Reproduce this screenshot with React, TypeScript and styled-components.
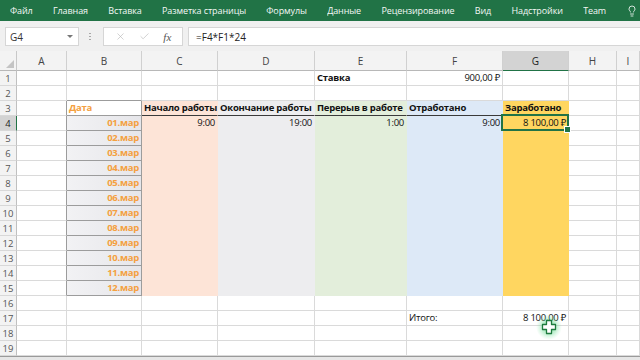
import styled, { createGlobalStyle } from "styled-components";
import { Lightbulb, X, Check } from "lucide-react";

const GlobalStyle = createGlobalStyle`
  html, body {
    margin: 0;
    padding: 0;
    background: #f0f0f0;
  }
  body {
    width: 640px;
    height: 360px;
    overflow: hidden;
    font-family: "Open Sans", "Noto Sans", sans-serif;
  }
`;

const Window = styled.div`
  position: relative;
  width: 640px;
  height: 360px;
  display: flex;
  flex-direction: column;
  background: #f0f0f0;
  overflow: hidden;
`;

const Ribbon = styled.nav`
  height: 21px;
  flex: none;
  background: #217346;
  display: flex;
  align-items: center;
  padding-left: 10px;
  gap: 20.3px;
  color: #ffffff;
  font-size: 9px;
  letter-spacing: -0.1px;
`;

const Tab = styled.span`
  white-space: nowrap;
  opacity: 0.95;
`;

const TellMe = styled.span`
  margin-left: auto;
  margin-right: 4px;
  display: flex;
`;

const FormulaBar = styled.div`
  height: 30px;
  flex: none;
  display: flex;
  align-items: center;
  padding: 1px 0 0 5px;
  box-sizing: border-box;
  background: #f0f0f0;
`;

const NameBox = styled.div`
  width: 74px;
  height: 19px;
  box-sizing: border-box;
  background: #fff;
  border: 1px solid #d6d6d6;
  display: flex;
  align-items: center;
  justify-content: space-between;
  padding: 0 5px 0 4px;
  font-size: 10px;
  color: #333;
`;

const Caret = styled.span`
  width: 0;
  height: 0;
  border-left: 3px solid transparent;
  border-right: 3px solid transparent;
  border-top: 3px solid #777;
`;

const Grip = styled.span`
  width: 2px;
  margin: 0 12px 0 10px;
  height: 10px;
  background: radial-gradient(circle, #a8a8a8 45%, transparent 50%) 0 0 / 2px 3px repeat-y;
`;

const ButtonBox = styled.div`
  width: 80px;
  height: 19px;
  box-sizing: border-box;
  background: #fff;
  border: 1px solid #d6d6d6;
  display: flex;
  align-items: center;
  justify-content: space-around;
  padding: 0 4px;
  color: #b8b8b8;
`;

const Fx = styled.span`
  font-family: "Liberation Serif", serif;
  font-style: italic;
  font-size: 11px;
  color: #555;
`;

const FormulaInput = styled.div`
  flex: 1;
  height: 19px;
  margin-left: 5px;
  box-sizing: border-box;
  background: #fff;
  border: 1px solid #d6d6d6;
  border-right: none;
  display: flex;
  align-items: center;
  padding-left: 7px;
  font-size: 10px;
  color: #222;
`;

const Sheet = styled.div`
  display: grid;
  grid-template-columns: 17px 50px 75px 76px 97px 92px 96px 66px 48px 23px;
  grid-template-rows: 20px;
  grid-auto-rows: 15px;
  background: #ffffff;
  font-size: 9.5px;
  letter-spacing: -0.25px;
  color: #111;
`;

const Corner = styled.div`
  position: relative;
  background: #f3f3f3;
  border-right: 1px solid #c8c8c8;
  border-bottom: 1px solid #b8b8b8;
  box-sizing: border-box;
  &::after {
    content: "";
    position: absolute;
    right: 2px;
    bottom: 2px;
    border-left: 8px solid transparent;
    border-bottom: 8px solid #c4c4c4;
  }
`;

const ColHeader = styled.div<{ $active?: boolean }>`
  background: ${(p) => (p.$active ? "#d3d3d3" : "#f3f3f3")};
  color: ${(p) => (p.$active ? "#222" : "#444")};
  border-right: 1px solid #d0d0d0;
  border-bottom: 1px solid ${(p) => (p.$active ? "#217346" : "#b8b8b8")};
  box-sizing: border-box;
  display: flex;
  align-items: center;
  justify-content: center;
  font-size: 10px;
  letter-spacing: 0;
`;

const RowHeader = styled.div<{ $active?: boolean }>`
  background: ${(p) => (p.$active ? "#d3d3d3" : "#f3f3f3")};
  color: ${(p) => (p.$active ? "#222" : "#555")};
  border-right: 1px solid ${(p) => (p.$active ? "#217346" : "#c0c0c0")};
  border-bottom: 1px solid #d8d8d8;
  box-sizing: border-box;
  display: flex;
  align-items: center;
  justify-content: center;
  font-size: 9.5px;
  letter-spacing: 0;
`;

const Cell = styled.div<{
  $fill: string;
  $right: string;
  $bottom: string;
  $align: "left" | "right";
  $bold?: boolean;
  $color?: string;
}>`
  position: relative;
  background: ${(p) => p.$fill};
  border-right: 1px solid ${(p) => p.$right};
  border-bottom: 1px solid ${(p) => p.$bottom};
  box-sizing: border-box;
  display: flex;
  align-items: center;
  justify-content: ${(p) => (p.$align === "right" ? "flex-end" : "flex-start")};
  padding: 0 2px;
  white-space: nowrap;
  font-weight: ${(p) => (p.$bold ? 700 : 400)};
  color: ${(p) => p.$color || "#111"};
  line-height: 1;
`;

const Spill = styled.span`
  position: relative;
  z-index: 2;
`;

const Selection = styled.div`
  position: absolute;
  inset: -2px -1px -1px -2px;
  border: 2px solid #217346;
  z-index: 3;
  pointer-events: none;
  &::after {
    content: "";
    position: absolute;
    right: -4px;
    bottom: -4px;
    width: 5px;
    height: 5px;
    background: #217346;
    border: 1px solid #fff;
  }
`;

const Cursor = styled.svg`
  position: absolute;
  left: 536px;
  top: 314px;
  z-index: 5;
`;

const BottomEdge = styled.div`
  flex: 1;
  border-top: 1px solid #9a9a9a;
  background: #e6e6e6;
`;

const TABS = [
  "Файл",
  "Главная",
  "Вставка",
  "Разметка страницы",
  "Формулы",
  "Данные",
  "Рецензирование",
  "Вид",
  "Надстройки",
  "Team",
];

const COLS = ["A", "B", "C", "D", "E", "F", "G", "H", "I"];

const FILLS: Record<string, string> = {
  C: "#fde4d7",
  D: "#ededef",
  E: "#e3eedb",
  F: "#dde9f7",
  G: "#ffd660",
};

const ORANGE = "#f4a040";
const GRID = "#dadada";
const BOX = "#9c9c9c";

type Content = { text: string; align?: "left" | "right"; bold?: boolean; color?: string };

const CONTENT: Record<string, Content> = {
  E1: { text: "Ставка", bold: true },
  F1: { text: "900,00 ₽", align: "right" },
  B3: { text: "Дата", bold: true, color: ORANGE },
  C3: { text: "Начало работы", bold: true },
  D3: { text: "Окончание работы", bold: true },
  E3: { text: "Перерыв в работе", bold: true },
  F3: { text: "Отработано", bold: true },
  G3: { text: "Заработано", bold: true },
  C4: { text: "9:00", align: "right" },
  D4: { text: "19:00", align: "right" },
  E4: { text: "1:00", align: "right" },
  F4: { text: "9:00", align: "right" },
  G4: { text: "8 100,00 ₽", align: "right" },
  F17: { text: "Итого:" },
  G17: { text: "8 100,00 ₽", align: "right" },
};

for (let d = 1; d <= 12; d++) {
  CONTENT[`B${d + 3}`] = {
    text: `${String(d).padStart(2, "0")}.мар`,
    align: "right",
    bold: true,
    color: ORANGE,
  };
}

const ROWS = Array.from({ length: 19 }, (_, i) => i + 1);

function cellStyle(col: string, row: number) {
  const inTable = row >= 3 && row <= 15;
  const fill = inTable && FILLS[col] ? FILLS[col] : "#ffffff";
  let right = fill !== "#ffffff" ? fill : GRID;
  let bottom = fill !== "#ffffff" ? fill : GRID;

  if (inTable && (col === "A" || col === "B")) right = BOX;
  if (col === "B" && row >= 2 && row <= 15) bottom = BOX;
  if (row >= 4 && row <= 15 && col === "B")
    return { fill: "linear-gradient(90deg, #f2f2f4, #e6e6ea)", right, bottom };
  if (row === 3 && ["C", "D", "E", "F"].includes(col)) bottom = "#3a3a3a";

  return { fill, right, bottom };
}

export default function App() {
  return (
    <Window>
      <GlobalStyle />
      <Ribbon>
        {TABS.map((t) => (
          <Tab key={t}>{t}</Tab>
        ))}
        <TellMe>
          <Lightbulb size={12} strokeWidth={1.6} />
        </TellMe>
      </Ribbon>

      <FormulaBar>
        <NameBox>
          G4
          <Caret />
        </NameBox>
        <Grip />
        <ButtonBox>
          <X size={11} strokeWidth={1.4} />
          <Check size={11} strokeWidth={1.4} />
          <Fx>fx</Fx>
        </ButtonBox>
        <FormulaInput>=F4*F1*24</FormulaInput>
      </FormulaBar>

      <Sheet>
        <Corner />
        {COLS.map((c) => (
          <ColHeader key={`h${c}`} $active={c === "G"}>
            {c}
          </ColHeader>
        ))}
        {ROWS.map((r) => [
          <RowHeader key={`r${r}`} $active={r === 4}>
            {r}
          </RowHeader>,
          ...COLS.map((c) => {
            const id = `${c}${r}`;
            const s = cellStyle(c, r);
            const content = CONTENT[id];
            return (
              <Cell
                key={id}
                $fill={s.fill}
                $right={s.right}
                $bottom={s.bottom}
                $align={content?.align || "left"}
                $bold={content?.bold}
                $color={content?.color}
              >
                {content && <Spill>{content.text}</Spill>}
                {id === "G4" && <Selection />}
              </Cell>
            );
          }),
        ])}
      </Sheet>
      <BottomEdge />

      <Cursor width="26" height="26" viewBox="0 0 26 26">
        <defs>
          <radialGradient id="glow">
            <stop offset="0%" stopColor="#3fcf6f" stopOpacity="0.75" />
            <stop offset="60%" stopColor="#5fd98a" stopOpacity="0.35" />
            <stop offset="100%" stopColor="#8fe6ad" stopOpacity="0" />
          </radialGradient>
        </defs>
        <circle cx="13" cy="13" r="13" fill="url(#glow)" />
        <path
          d="M10.5 6.5h5v4h4v5h-4v4h-5v-4h-4v-5h4z"
          fill="#ffffff"
          stroke="#1f7a3e"
          strokeWidth="1.3"
          strokeLinejoin="round"
        />
      </Cursor>
    </Window>
  );
}
